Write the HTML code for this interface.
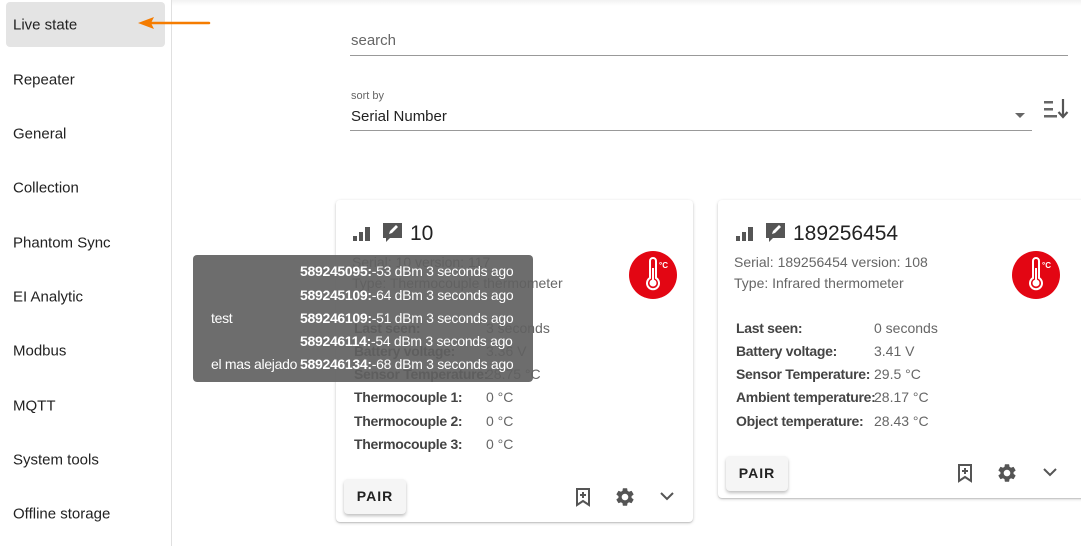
<!DOCTYPE html>
<html><head><meta charset="utf-8"><style>
*{margin:0;padding:0;box-sizing:border-box}
body{width:1081px;height:546px;overflow:hidden;background:#fff;font-family:"Liberation Sans",Arial,sans-serif;position:relative;color:rgba(0,0,0,.87)}
.a{position:absolute;white-space:nowrap}
.side{position:absolute;left:0;top:0;width:172px;height:546px;border-right:1px solid #e0e0e0}
.nav{position:absolute;left:13px;font-size:15px;color:#222;transform:translateY(-50%);margin-top:1px}
.hl{position:absolute;left:6px;top:2px;width:159px;height:45px;background:#e4e4e4;border-radius:4px}
.card{position:absolute;background:#fff;border-radius:4px;box-shadow:0 1px 3px rgba(0,0,0,.2),0 1px 1px rgba(0,0,0,.12)}
.t{font-size:14px;color:#666}
.lb{font-size:14px;font-weight:bold;color:#444;letter-spacing:-0.3px}
.v{font-size:14px;color:#666}
.pair{position:absolute;width:62px;height:35px;background:#f5f5f5;border-radius:4px;box-shadow:0 2px 3px rgba(0,0,0,.25);font-size:14px;font-weight:bold;letter-spacing:1px;text-align:center;line-height:35px;color:#222}
.tip{position:absolute;left:193px;top:255px;width:340px;height:127px;background:rgba(97,97,97,.92);border-radius:4px}
.tr{font-size:14px;color:#fff;letter-spacing:-0.3px}
</style></head><body>
<div class="side"></div>
<div class="hl"></div>
<div class="nav" style="top:24px">Live state</div>
<div class="nav" style="top:79px">Repeater</div>
<div class="nav" style="top:133px">General</div>
<div class="nav" style="top:187px">Collection</div>
<div class="nav" style="top:242px">Phantom Sync</div>
<div class="nav" style="top:296px">EI Analytic</div>
<div class="nav" style="top:350px">Modbus</div>
<div class="nav" style="top:405px">MQTT</div>
<div class="nav" style="top:459px">System tools</div>
<div class="nav" style="top:513px">Offline storage</div>
<svg class="a" style="left:136px;top:14px" width="76" height="20"><line x1="12" y1="9" x2="73" y2="9" stroke="#f57c00" stroke-width="2.5" stroke-linecap="round"/><path d="M2 9 L18 3 L15 9 L18 15Z" fill="#f57c00"/></svg>
<div class="a" style="left:172px;top:0;width:909px;height:6px;background:linear-gradient(#f2f2f2,#fff)"></div>

<div class="a" style="left:351px;top:32px;font-size:15px;color:#666">search</div>
<div class="a" style="left:350px;top:55px;width:718px;height:1px;background:#999"></div>
<div class="a" style="left:351px;top:90px;font-size:11px;color:#666">sort by</div>
<div class="a" style="left:351px;top:108px;font-size:15px;color:#222">Serial Number</div>
<svg class="a" style="left:1015px;top:113px" width="10" height="6"><path d="M0 0H10L5 5Z" fill="#666"/></svg>
<div class="a" style="left:350px;top:130px;width:682px;height:1px;background:#999"></div>
<svg class="a" style="left:1043px;top:98px" width="26" height="22"><rect x="1" y="3" width="9" height="2.5" fill="#666"/><rect x="1" y="10" width="9" height="2.5" fill="#666"/><rect x="1" y="17" width="13" height="2.5" fill="#666"/><path d="M20 1V18M15.5 14L20 19L24.5 14" stroke="#555" stroke-width="2.2" fill="none"/></svg>

<div class="card" style="left:336px;top:200px;width:357px;height:322px"></div>
<div class="card" style="left:718px;top:200px;width:370px;height:298px"></div>

<!-- card1 -->
<svg class="a" style="left:352px;top:224px" width="21" height="18"><rect x="1" y="12" width="4" height="5" fill="#555"/><rect x="7" y="8" width="4" height="9" fill="#555"/><rect x="13" y="3" width="5" height="14" fill="#555"/></svg>
<svg class="a" style="left:382px;top:222px" width="21" height="21"><path d="M1 1H20V16H8L4 20V16H1Z" fill="#555"/><path d="M7 12L8 9L14 3L16 5L10 11Z" fill="#fff"/></svg>
<div class="a" style="left:410px;top:222px;font-size:21px;color:#222">10</div>
<div class="a t" style="left:352px;top:254px">Serial: 10 version: 117</div>
<div class="a t" style="left:352px;top:275px">Type: Thermocouple thermometer</div>
<div class="a lb" style="left:354px;top:320px">Last seen:</div><div class="a v" style="left:486px;top:320px">3 seconds</div>
<div class="a lb" style="left:354px;top:343px">Battery voltage:</div><div class="a v" style="left:486px;top:343px">3.36 V</div>
<div class="a lb" style="left:354px;top:366px">Sensor Temperature:</div><div class="a v" style="left:486px;top:366px">28.75 °C</div>
<div class="a lb" style="left:354px;top:389px">Thermocouple 1:</div><div class="a v" style="left:486px;top:389px">0 °C</div>
<div class="a lb" style="left:354px;top:413px">Thermocouple 2:</div><div class="a v" style="left:486px;top:413px">0 °C</div>
<div class="a lb" style="left:354px;top:436px">Thermocouple 3:</div><div class="a v" style="left:486px;top:436px">0 °C</div>
<div class="pair" style="left:344px;top:479px">PAIR</div>

<!-- card2 -->
<svg class="a" style="left:735px;top:224px" width="21" height="18"><rect x="1" y="12" width="4" height="5" fill="#555"/><rect x="7" y="8" width="4" height="9" fill="#555"/><rect x="13" y="3" width="5" height="14" fill="#555"/></svg>
<svg class="a" style="left:765px;top:222px" width="21" height="21"><path d="M1 1H20V16H8L4 20V16H1Z" fill="#555"/><path d="M7 12L8 9L14 3L16 5L10 11Z" fill="#fff"/></svg>
<div class="a" style="left:793px;top:222px;font-size:21px;color:#222">189256454</div>
<div class="a t" style="left:734px;top:254px">Serial: 189256454 version: 108</div>
<div class="a t" style="left:734px;top:275px">Type: Infrared thermometer</div>
<div class="a lb" style="left:736px;top:320px">Last seen:</div><div class="a v" style="left:874px;top:320px">0 seconds</div>
<div class="a lb" style="left:736px;top:343px">Battery voltage:</div><div class="a v" style="left:874px;top:343px">3.41 V</div>
<div class="a lb" style="left:736px;top:366px">Sensor Temperature:</div><div class="a v" style="left:874px;top:366px">29.5 °C</div>
<div class="a lb" style="left:736px;top:389px">Ambient temperature:</div><div class="a v" style="left:874px;top:389px">28.17 °C</div>
<div class="a lb" style="left:736px;top:413px">Object temperature:</div><div class="a v" style="left:874px;top:413px">28.43 °C</div>
<div class="pair" style="left:726px;top:456px">PAIR</div>

<!-- thermometers -->
<svg class="a" style="left:629px;top:251px" width="48" height="48"><circle cx="24" cy="24" r="24" fill="#e30613"/><path d="M21 10a3 3 0 0 1 6 0V27a6 6 0 1 1-6 0Z" fill="none" stroke="#fff" stroke-width="2"/><circle cx="24" cy="32" r="3.5" fill="#fff"/><rect x="23" y="17" width="2" height="14" fill="#fff"/><text x="30" y="17" font-size="8" fill="#fff" font-family="Liberation Sans" font-weight="bold">°C</text></svg>
<svg class="a" style="left:1012px;top:251px" width="48" height="48"><circle cx="24" cy="24" r="24" fill="#e30613"/><path d="M21 10a3 3 0 0 1 6 0V27a6 6 0 1 1-6 0Z" fill="none" stroke="#fff" stroke-width="2"/><circle cx="24" cy="32" r="3.5" fill="#fff"/><rect x="23" y="17" width="2" height="14" fill="#fff"/><text x="30" y="17" font-size="8" fill="#fff" font-family="Liberation Sans" font-weight="bold">°C</text></svg>

<!-- action icons -->
<svg class="a" style="left:574px;top:487px" width="18" height="20"><path d="M3 2H15V18L9 14L3 18Z" fill="none" stroke="#555" stroke-width="2"/><path d="M9 5V11M6 8H12" stroke="#555" stroke-width="2"/></svg>
<svg class="a" style="left:614px;top:486px" width="22" height="22" viewBox="0 0 24 24"><path fill="#555" d="M19.14 12.94c.04-.3.06-.61.06-.94 0-.32-.02-.64-.07-.94l2.03-1.58a.49.49 0 0 0 .12-.61l-1.92-3.32a.488.488 0 0 0-.59-.22l-2.39.96c-.5-.38-1.03-.7-1.62-.94l-.36-2.54a.484.484 0 0 0-.48-.41h-3.84c-.24 0-.43.17-.47.41l-.36 2.54c-.59.24-1.13.57-1.62.94l-2.39-.96c-.22-.08-.47 0-.59.22L2.74 8.87c-.12.21-.08.47.12.61l2.03 1.58c-.05.3-.09.63-.09.94s.02.64.07.94l-2.03 1.58a.49.49 0 0 0-.12.61l1.92 3.32c.12.22.37.29.59.22l2.39-.96c.5.38 1.03.7 1.62.94l.36 2.54c.05.24.24.41.48.41h3.84c.24 0 .44-.17.47-.41l.36-2.54c.59-.24 1.13-.56 1.62-.94l2.39.96c.22.08.47 0 .59-.22l1.92-3.32c.12-.22.07-.47-.12-.61l-2.01-1.58zM12 15.6c-1.98 0-3.6-1.62-3.6-3.6s1.62-3.6 3.6-3.6 3.6 1.62 3.6 3.6-1.62 3.6-3.6 3.6z"/></svg>
<svg class="a" style="left:660px;top:491px" width="14" height="10"><path d="M1 2L7 8L13 2" stroke="#555" stroke-width="2" fill="none"/></svg>
<svg class="a" style="left:956px;top:463px" width="18" height="20"><path d="M3 2H15V18L9 14L3 18Z" fill="none" stroke="#555" stroke-width="2"/><path d="M9 5V11M6 8H12" stroke="#555" stroke-width="2"/></svg>
<svg class="a" style="left:996px;top:462px" width="22" height="22" viewBox="0 0 24 24"><path fill="#555" d="M19.14 12.94c.04-.3.06-.61.06-.94 0-.32-.02-.64-.07-.94l2.03-1.58a.49.49 0 0 0 .12-.61l-1.92-3.32a.488.488 0 0 0-.59-.22l-2.39.96c-.5-.38-1.03-.7-1.62-.94l-.36-2.54a.484.484 0 0 0-.48-.41h-3.84c-.24 0-.43.17-.47.41l-.36 2.54c-.59.24-1.13.57-1.62.94l-2.39-.96c-.22-.08-.47 0-.59.22L2.74 8.87c-.12.21-.08.47.12.61l2.03 1.580c-.05.3-.09.63-.09.94s.02.64.07.94l-2.03 1.58a.49.49 0 0 0-.12.61l1.92 3.32c.12.22.37.29.59.22l2.39-.96c.5.38 1.03.7 1.62.94l.36 2.54c.05.24.24.41.48.41h3.84c.24 0 .44-.17.47-.41l.36-2.54c.59-.24 1.13-.56 1.62-.94l2.39.96c.22.08.47 0 .59-.22l1.92-3.32c.12-.22.07-.47-.12-.61l-2.01-1.58zM12 15.6c-1.98 0-3.6-1.62-3.6-3.6s1.62-3.6 3.6-3.6 3.6 1.62 3.6 3.6-1.62 3.6-3.6 3.6z"/></svg>
<svg class="a" style="left:1043px;top:467px" width="14" height="10"><path d="M1 2L7 8L13 2" stroke="#555" stroke-width="2" fill="none"/></svg>

<!-- tooltip -->
<div class="tip"></div>
<div class="a tr" style="left:300px;top:263px"><b>589245095:</b>-53 dBm 3 seconds ago</div>
<div class="a tr" style="left:300px;top:287px"><b>589245109:</b>-64 dBm 3 seconds ago</div>
<div class="a tr" style="left:211px;top:310px">test</div>
<div class="a tr" style="left:300px;top:310px"><b>589246109:</b>-51 dBm 3 seconds ago</div>
<div class="a tr" style="left:300px;top:333px"><b>589246114:</b>-54 dBm 3 seconds ago</div>
<div class="a tr" style="left:211px;top:356px">el mas alejado</div>
<div class="a tr" style="left:300px;top:356px"><b>589246134:</b>-68 dBm 3 seconds ago</div>
</body></html>
